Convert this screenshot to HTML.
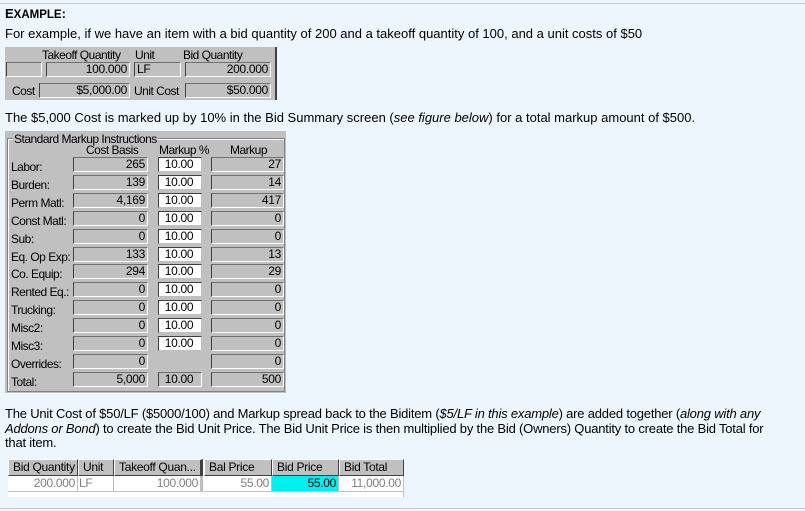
<!DOCTYPE html>
<html><head><style>
*{margin:0;padding:0;box-sizing:border-box}
body{width:805px;height:511px;background:#eef6fd;font-family:"Liberation Sans",Arial,sans-serif;font-size:13px;color:#000;position:relative;overflow:hidden}
.a{position:absolute;white-space:nowrap}
.hr{position:absolute;left:0;width:805px;height:1px;background:#c8ccd0}
.pnl{position:absolute;background:#c0c0c0;font-size:12px;letter-spacing:-0.5px}
.f{position:absolute;height:15px;background:#c0c0c0;border-top:1px solid #707070;border-left:1px solid #404040;border-bottom:1px solid #fff;border-right:1px solid #fff;text-align:right;padding-right:2px;line-height:13px;font-size:12px;letter-spacing:-0.3px}
.w{background:#fff;border-top:1px solid #404040;border-left:1px solid #404040;border-bottom:1px solid #c0c0c0;border-right:1px solid #c0c0c0;text-align:center}
.l{position:absolute;font-size:12px;letter-spacing:-0.5px;white-space:nowrap}
.g{position:absolute;font-size:12px;letter-spacing:-0.3px}
.gh{position:absolute;top:459px;height:17px;background:#c0c0c0;border-top:1px solid #fff;border-left:1px solid #fff;border-right:1px solid #404040;border-bottom:1px solid #404040;padding-left:4px;line-height:14px}
.gc{position:absolute;top:476px;height:16px;background:#fff;border-right:1px solid #c0c0c0;border-bottom:1px solid #c0c0c0;text-align:right;padding-right:2px;line-height:15px;color:#808080}
</style></head><body>
<div class="hr" style="top:3px"></div>
<div class="hr" style="top:508px"></div>
<div class="a" style="left:5px;top:6px;font-weight:bold;font-size:13px">E<span style="font-size:11.5px">XAMPLE</span>:</div>
<div class="a" style="left:5px;top:26px">For example, if we have an item with a bid quantity of 200 and a takeoff quantity of 100, and a unit costs of $50</div>

<div class="pnl" style="left:5px;top:47px;width:272px;height:53px;border-right:2px solid #404040">
 <div class="l" style="left:37px;top:1px">Takeoff Quantity</div>
 <div class="l" style="left:130px;top:1px">Unit</div>
 <div class="l" style="left:178px;top:1px">Bid Quantity</div>
 <div class="f" style="left:1px;top:15px;width:36px"></div>
 <div class="f" style="left:41px;top:15px;width:84px">100.000</div>
 <div class="f" style="left:129px;top:15px;width:47px;text-align:left;padding-left:2px">LF</div>
 <div class="f" style="left:180px;top:15px;width:86px">200.000</div>
 <div class="l" style="left:7px;top:37px">Cost</div>
 <div class="f" style="left:34px;top:36px;width:91px">$5,000.00</div>
 <div class="l" style="left:129px;top:37px">Unit Cost</div>
 <div class="f" style="left:180px;top:36px;width:86px">$50.000</div>
</div>

<div class="a" style="left:5px;top:110px">The $5,000 Cost is marked up by 10% in the Bid Summary screen (<i>see figure below</i>) for a total markup amount of $500.</div>

<div class="pnl" style="left:5px;top:131px;width:281px;height:263px;border-bottom:1px solid #fff">
 <div style="position:absolute;left:2px;top:7px;width:278px;height:254px;border:1px solid #808080;box-shadow:1px 1px 0 #fff inset"></div>
 <div class="l" style="left:8px;top:1px;background:#c0c0c0;padding:0 1px">Standard Markup Instructions</div>
 <div class="l" style="left:81px;top:12px">Cost Basis</div>
 <div class="l" style="left:154px;top:12px">Markup %</div>
 <div class="l" style="left:225px;top:12px">Markup</div>
</div>
<div id="rows"></div>

<div class="a" style="left:5px;top:407px;font-size:13px;letter-spacing:-0.2px;line-height:14.5px;white-space:normal;width:800px">The Unit Cost of $50/LF ($5000/100) and Markup spread back to the Biditem (<i>$5/LF in this example</i>) are added together (<i>along with any<br>Addons or Bond</i>) to create the Bid Unit Price. The Bid Unit Price is then multiplied by the Bid (Owners) Quantity to create the Bid Total for<br>that item.</div>

<div class="g">
<div class="gh" style="left:8px;width:70px">Bid Quantity</div>
<div class="gh" style="left:78px;width:36px">Unit</div>
<div class="gh" style="left:114px;width:89px;border-right:3px solid #404040">Takeoff Quan...</div>
<div class="gh" style="left:204px;width:68px">Bal Price</div>
<div class="gh" style="left:272px;width:67px">Bid Price</div>
<div class="gh" style="left:339px;width:65px">Bid Total</div>
<div class="gc" style="left:8px;width:70px">200.000</div>
<div class="gc" style="left:78px;width:36px;text-align:left;padding-left:1px">LF</div>
<div class="gc" style="left:114px;width:89px;border-right:3px solid #c0c0c0">100.000</div>
<div class="gc" style="left:204px;width:68px">55.00</div>
<div class="gc" style="left:272px;width:67px;background:#00f0f0;color:#000">55.00</div>
<div class="gc" style="left:339px;width:65px">11,000.00</div>
<div style="position:absolute;left:8px;top:492px;width:396px;height:5px;background:#fff;border-right:1px solid #c0c0c0"></div>
</div>

<script>
var d=[["Labor:","265","10.00","27"],["Burden:","139","10.00","14"],["Perm Matl:","4,169","10.00","417"],["Const Matl:","0","10.00","0"],["Sub:","0","10.00","0"],["Eq. Op Exp:","133","10.00","13"],["Co. Equip:","294","10.00","29"],["Rented Eq.:","0","10.00","0"],["Trucking:","0","10.00","0"],["Misc2:","0","10.00","0"],["Misc3:","0","10.00","0"],["Overrides:","0",null,"0"],["Total:","5,000","T10.00","500"]];
var h="";
d.forEach(function(r,i){var y=157+i*17.9;
h+='<div class="l" style="left:11px;top:'+(y+3)+'px">'+r[0]+'</div>';
h+='<div class="f" style="left:73px;top:'+y+'px;width:75px">'+r[1]+'</div>';
if(r[2]){if(r[2][0]=="T")h+='<div class="f" style="left:158px;top:'+y+'px;width:44px;text-align:center">'+r[2].slice(1)+'</div>';
else h+='<div class="f w" style="left:158px;top:'+y+'px;width:44px">'+r[2]+'</div>';}
h+='<div class="f" style="left:211px;top:'+y+'px;width:73px">'+r[3]+'</div>';});
document.getElementById("rows").innerHTML=h;
</script>
</body></html>
